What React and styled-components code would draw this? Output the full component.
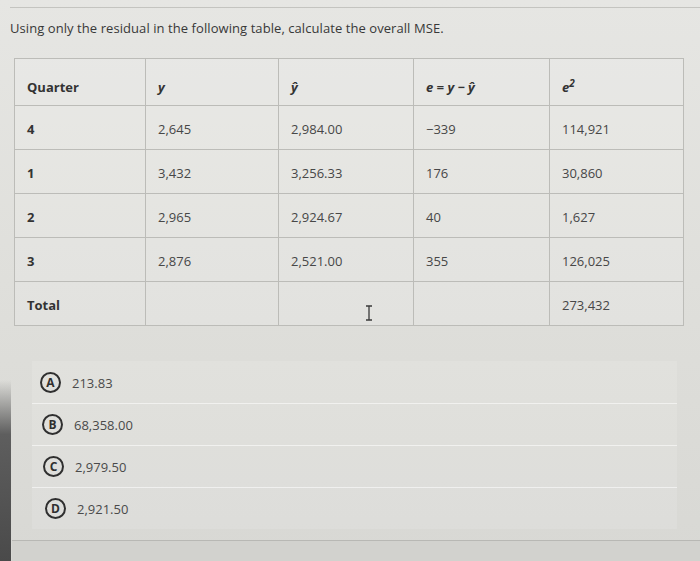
import React from "react";
import styled, { createGlobalStyle } from "styled-components";

const Global = createGlobalStyle`
  html, body { margin: 0; padding: 0; }
  body {
    width: 700px;
    height: 561px;
    overflow: hidden;
    background: linear-gradient(180deg, #e6e6e3 0%, #dfdfdb 50%, #d8d8d4 100%);
    font-family: "Open Sans", "Liberation Sans", sans-serif;
    color: #3a3a3a;
  }
`;

const Page = styled.div`
  position: relative;
  width: 700px;
  height: 561px;
  display: flex;
  flex-direction: column;
`;

const TopRule = styled.div`
  height: 1px;
  margin: 7px 0 0 10px;
  background: #c4c4c0;
`;

const Question = styled.p`
  margin: 11px 0 0 10px;
  font-size: 13px;
  letter-spacing: 0.07px;
  line-height: 18px;
  color: #383838;
`;

const TableWrap = styled.div`
  position: relative;
  margin: 21px 0 0 14px;
  width: 669px;
`;

const Table = styled.table`
  width: 669px;
  table-layout: fixed;
  border-collapse: collapse;
  background: rgba(255, 255, 255, 0.14);
  border: 1px solid #bcbcb8;
`;

const Col = styled.col`
  width: ${(p) => p.$w}px;
`;

const Th = styled.th`
  height: 47px;
  box-sizing: border-box;
  padding: 19px 12px 0;
  vertical-align: top;
  text-align: left;
  font-size: 13px;
  line-height: 18px;
  font-weight: 700;
  font-style: ${(p) => (p.$italic ? "italic" : "normal")};
  color: #333;
  border: 1px solid #bcbcb8;
`;

const Sup = styled.sup`
  font-size: 10px;
  line-height: 0;
`;

const Td = styled.td`
  height: 44px;
  box-sizing: border-box;
  padding: 14px 12px 0;
  vertical-align: top;
  font-size: 13px;
  line-height: 18px;
  font-weight: ${(p) => (p.$bold ? 700 : 400)};
  color: ${(p) => (p.$bold ? "#333" : "#474747")};
  border: 1px solid #bcbcb8;
`;

const Cursor = styled.svg`
  position: absolute;
  left: 350px;
  top: 247px;
`;

const Options = styled.div`
  margin: 35px 23px 0 32px;
  background: rgba(255, 255, 255, 0.12);
  display: flex;
  flex-direction: column;
`;

const Option = styled.div`
  height: 42px;
  box-sizing: border-box;
  display: flex;
  align-items: center;
  gap: 11px;
  padding-left: ${(p) => p.$indent}px;
  border-top: 1px solid ${(p) => (p.$first ? "transparent" : "rgba(255,255,255,0.55)")};
`;

const Badge = styled.span`
  flex: none;
  box-sizing: border-box;
  width: 21px;
  height: 21px;
  border: 2px solid #2f2f2f;
  border-radius: 50%;
  display: flex;
  align-items: center;
  justify-content: center;
  font-size: 12px;
  font-weight: 700;
  color: #2f2f2f;
  line-height: 1;
`;

const OptionText = styled.span`
  font-size: 13px;
  color: #4a4a4a;
`;

const BottomRule = styled.div`
  margin: 11px 0 0 12px;
  height: 1px;
  background: #b8b8b4;
`;

const Footer = styled.div`
  flex: 1;
  margin-left: 12px;
  background: #d2d2ce;
`;

const Bezel = styled.div`
  position: absolute;
  left: 0;
  top: 380px;
  bottom: 0;
  width: 11px;
  background: linear-gradient(180deg, rgba(90,90,90,0) 0%, #5e5e5e 30%, #4a4a4a 100%);
`;

const widths = [131, 133, 135, 136, 134];

const rows = [
  ["4", "2,645", "2,984.00", "\u2212339", "114,921"],
  ["1", "3,432", "3,256.33", "176", "30,860"],
  ["2", "2,965", "2,924.67", "40", "1,627"],
  ["3", "2,876", "2,521.00", "355", "126,025"],
];

const options = [
  ["A", "213.83", 8],
  ["B", "68,358.00", 10],
  ["C", "2,979.50", 11],
  ["D", "2,921.50", 13],
];

export default function App() {
  return (
    <Page>
      <Global />
      <TopRule />
      <Question>Using only the residual in the following table, calculate the overall MSE.</Question>
      <TableWrap>
        <Table>
          <colgroup>
            {widths.map((w, i) => (
              <Col key={i} $w={w} />
            ))}
          </colgroup>
          <thead>
            <tr>
              <Th>Quarter</Th>
              <Th $italic>y</Th>
              <Th $italic>ŷ</Th>
              <Th $italic>e = y − ŷ</Th>
              <Th $italic>
                e<Sup>2</Sup>
              </Th>
            </tr>
          </thead>
          <tbody>
            {rows.map((r) => (
              <tr key={r[0]}>
                <Td $bold>{r[0]}</Td>
                <Td>{r[1]}</Td>
                <Td>{r[2]}</Td>
                <Td>{r[3]}</Td>
                <Td>{r[4]}</Td>
              </tr>
            ))}
            <tr>
              <Td $bold>Total</Td>
              <Td />
              <Td />
              <Td />
              <Td>273,432</Td>
            </tr>
          </tbody>
        </Table>
        <Cursor width="10" height="16" viewBox="0 0 10 16">
          <path d="M2 1h6M5 1v14M2 15h6" stroke="#3a3a3a" strokeWidth="1.3" fill="none" />
        </Cursor>
      </TableWrap>
      <Options>
        {options.map(([l, t, ind], i) => (
          <Option key={l} $indent={ind} $first={i === 0}>
            <Badge>{l}</Badge>
            <OptionText>{t}</OptionText>
          </Option>
        ))}
      </Options>
      <BottomRule />
      <Footer />
      <Bezel />
    </Page>
  );
}
